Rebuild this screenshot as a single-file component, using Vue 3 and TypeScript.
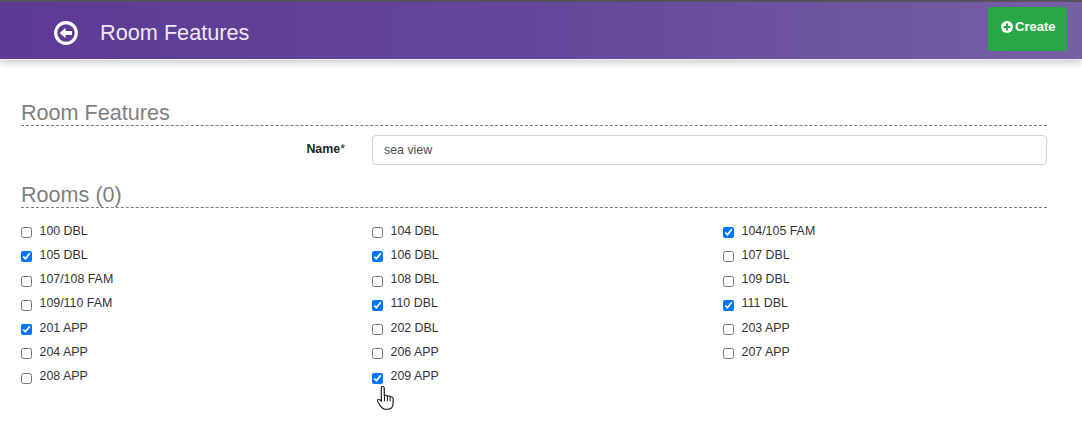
<script setup lang="ts">
interface Room {
  name: string
  checked: boolean
}

const rooms: Room[] = [
  { name: '100 DBL', checked: false },
  { name: '104 DBL', checked: false },
  { name: '104/105 FAM', checked: true },
  { name: '105 DBL', checked: true },
  { name: '106 DBL', checked: true },
  { name: '107 DBL', checked: false },
  { name: '107/108 FAM', checked: false },
  { name: '108 DBL', checked: false },
  { name: '109 DBL', checked: false },
  { name: '109/110 FAM', checked: false },
  { name: '110 DBL', checked: true },
  { name: '111 DBL', checked: true },
  { name: '201 APP', checked: true },
  { name: '202 DBL', checked: false },
  { name: '203 APP', checked: false },
  { name: '204 APP', checked: false },
  { name: '206 APP', checked: false },
  { name: '207 APP', checked: false },
  { name: '208 APP', checked: false },
  { name: '209 APP', checked: true },
]
</script>

<template>
  <div class="page">
    <header class="topbar">
      <div class="topbar-left">
        <svg class="back-icon" viewBox="0 0 24 24" aria-hidden="true">
          <circle cx="12" cy="12" r="10.3" fill="none" stroke="#fff" stroke-width="3.2" />
          <path d="M5.8 12 11.6 6.8V10H18V14H11.6V17.2Z" fill="#fff" />
        </svg>
        <h1 class="topbar-title">Room Features</h1>
      </div>
      <button class="create-btn" type="button">
        <svg class="plus-icon" viewBox="0 0 16 16" aria-hidden="true">
          <circle cx="8" cy="8" r="8" fill="#fff" />
          <path d="M6.7 3.4H9.3V6.7H12.6V9.3H9.3V12.6H6.7V9.3H3.4V6.7H6.7Z" fill="#28a745" />
        </svg>
        Create
      </button>
    </header>

    <main class="content">
      <h2 class="section-title">Room Features</h2>
      <div class="name-row">
        <label class="name-label" for="name">Name<span class="req">*</span></label>
        <input id="name" class="name-input" type="text" value="sea view" />
      </div>

      <h2 class="section-title">Rooms (0)</h2>
      <div class="rooms">
        <label v-for="room in rooms" :key="room.name" class="room">
          <input type="checkbox" :checked="room.checked" />
          <span>{{ room.name }}</span>
        </label>
      </div>
    </main>

    <!-- mouse pointer sitting over the 209 APP checkbox -->
    <svg class="pointer" viewBox="1 1 13.4 22.2" preserveAspectRatio="none" aria-hidden="true">
      <path
        d="M4.6 1.8C5.5 1 6.7 1.6 6.7 2.8V10.2C7.4 9.3 8.9 9.5 9.1 10.6 9.8 9.9 11.2 10.2 11.4 11.3 12.2 10.7 13.6 11.1 13.7 12.4V17.2C13.7 20.4 12 22.6 8.8 22.6 6 22.6 4.8 21.5 3.6 19.2L1.4 15C.9 13.9 2.3 12.9 3.3 13.8L4.4 15.1V3C4.4 2.5 4.4 2.1 4.6 1.8Z"
        fill="#fff"
        stroke="#111"
        stroke-width="0.9"
        stroke-linejoin="round"
      />
      <path d="M6.9 10.4V15M9.2 10.8V15M11.4 11.5V15" fill="none" stroke="#111" stroke-width="0.8" />
    </svg>
  </div>
</template>

<style>
html,
body {
  margin: 0;
  background: #fff;
}
</style>

<style scoped>
.page {
  position: relative;
  width: 1082px;
  height: 436px;
  overflow: hidden;
  font-family: "Liberation Sans", Arial, sans-serif;
  color: #212529;
}

.topbar {
  display: flex;
  justify-content: space-between;
  align-items: flex-start;
  height: 59px;
  padding-right: 15px;
  box-sizing: border-box;
  border-top: 2px solid #55525c;
  background: linear-gradient(90deg, #5d3a94 0%, #64479a 50%, #7560a4 100%);
  box-shadow: 0 1px 0 #f3f1f6, 0 4px 7px rgba(0, 0, 0, 0.2);
}

.topbar-left {
  display: flex;
  align-items: center;
  height: 61px;
  padding-left: 54px;
}

.back-icon {
  width: 24px;
  height: 24px;
}

.topbar-title {
  margin: 0 0 0 22px;
  font-size: 21.7px;
  font-weight: 400;
  line-height: 1;
  color: #eee9f5;
}

.create-btn {
  display: flex;
  align-items: center;
  gap: 2px;
  width: 79px;
  height: 44px;
  margin-top: 5px;
  padding: 0 0 5px 13px;
  border: 0;
  border-radius: 3px;
  background: #28a745;
  color: #fff;
  font-family: inherit;
  font-size: 13px;
  font-weight: 700;
}

.plus-icon {
  width: 12px;
  height: 12px;
}

.content {
  padding: 40px 35px 0 21px;
}

.section-title {
  margin: 0;
  height: 26px;
  border-bottom: 1px dashed #7a7a7a;
  font-size: 21.6px;
  font-weight: 400;
  line-height: 27px;
  color: #7f7f7f;
}

.name-row {
  display: flex;
  align-items: center;
  height: 30px;
  margin: 9px 0 16px;
}

.name-label {
  width: 324px;
  margin-right: 27px;
  padding-bottom: 3px;
  text-align: right;
  font-size: 12.4px;
  font-weight: 700;
}

.req {
  font-weight: 400;
}

.name-input {
  flex: 1;
  min-width: 0;
  height: 30px;
  box-sizing: border-box;
  padding: 0 11px;
  border: 1px solid #ced4da;
  border-radius: 4px;
  font-family: inherit;
  font-size: 12.4px;
  color: #495057;
}

.rooms {
  display: grid;
  grid-template-columns: repeat(3, 351px);
  grid-auto-rows: 24.3px;
  margin-top: 14.6px;
}

.room {
  display: flex;
  align-items: flex-start;
  font-size: 12.4px;
  line-height: 16px;
  color: #333;
}

.room input {
  width: 11px;
  height: 11px;
  margin: 4.4px 7.5px 0 0;
  accent-color: #0075ff;
}

.pointer {
  position: absolute;
  left: 377px;
  top: 386px;
  width: 17px;
  height: 24px;
}
</style>
